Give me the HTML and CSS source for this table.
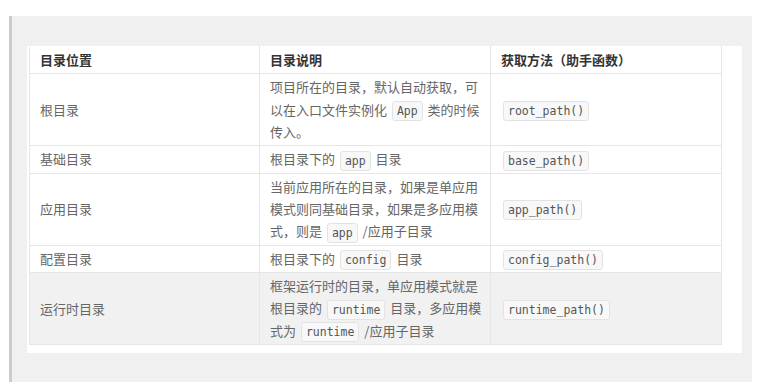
FILE: index.html
```html
<!DOCTYPE html>
<html lang="zh-CN">
<head>
<meta charset="utf-8">
<title>目录位置</title>
<link rel="stylesheet" href="styles.css">
</head>
<body>
<div class="page">
  <div class="panel">
    <div class="sheet">
      <table class="dirs">
        <colgroup><col class="c1"><col class="c2"><col class="c3"></colgroup>
        <thead>
          <tr><th>目录位置</th><th>目录说明</th><th>获取方法（助手函数）</th></tr>
        </thead>
        <tbody>
          <tr>
            <td>根目录</td>
            <td>项目所在的目录，默认自动获取，可<br>以在入口文件实例化 <code>App</code> 类的时候<br>传入。</td>
            <td><code>root_path()</code></td>
          </tr>
          <tr>
            <td>基础目录</td>
            <td>根目录下的 <code>app</code> 目录</td>
            <td><code>base_path()</code></td>
          </tr>
          <tr>
            <td>应用目录</td>
            <td>当前应用所在的目录，如果是单应用<br>模式则同基础目录，如果是多应用模<br>式，则是 <code>app</code> /应用子目录</td>
            <td><code>app_path()</code></td>
          </tr>
          <tr>
            <td>配置目录</td>
            <td>根目录下的 <code>config</code> 目录</td>
            <td><code>config_path()</code></td>
          </tr>
          <tr class="active">
            <td>运行时目录</td>
            <td>框架运行时的目录，单应用模式就是<br>根目录的 <code>runtime</code> 目录，多应用模<br>式为 <code>runtime</code> /应用子目录</td>
            <td><code>runtime_path()</code></td>
          </tr>
        </tbody>
      </table>
    </div>
  </div>
</div>
</body>
</html>
```

FILE: styles.css
```css
html, body {
  margin: 0;
  padding: 0;
  background: #ffffff;
}
body {
  font-family: "Noto Sans CJK SC", "Noto Sans", sans-serif;
  font-size: 13px;
  color: #666666;
}
.page {
  padding: 16px 0 0 9px;
}
.panel {
  width: 715px;
  height: 336px;
  background: #f0f0f0;
  border-left: 3px solid #cccccc;
  padding: 30px 10px 0 15px;
}
.sheet {
  background: #ffffff;
  padding: 0 8px 8px 2px;
}
.dirs {
  width: 692px;
  table-layout: fixed;
  border-collapse: collapse;
}
.c1 { width: 230px; }
.c2 { width: 231px; }
.c3 { width: 231px; }
.dirs th,
.dirs td {
  border: 1px solid #e6e6e6;
  padding: 2px 10px;
  line-height: 22.25px;
  text-align: left;
  vertical-align: middle;
  white-space: nowrap;
}
.dirs thead th {
  border-top-color: #ffffff;
  font-weight: bold;
  color: #333333;
}
.dirs tr.active td {
  background: #f1f1f1;
}
code {
  display: inline-block;
  font-family: "DejaVu Sans Mono", "Liberation Mono", monospace;
  font-size: 11.5px;
  line-height: 18px;
  padding: 0 4px;
  margin: 0 2px;
  color: #555555;
  background: #f8f8f8;
  border: 1px solid #e3e3e3;
  border-radius: 3px;
  vertical-align: middle;
}
```
